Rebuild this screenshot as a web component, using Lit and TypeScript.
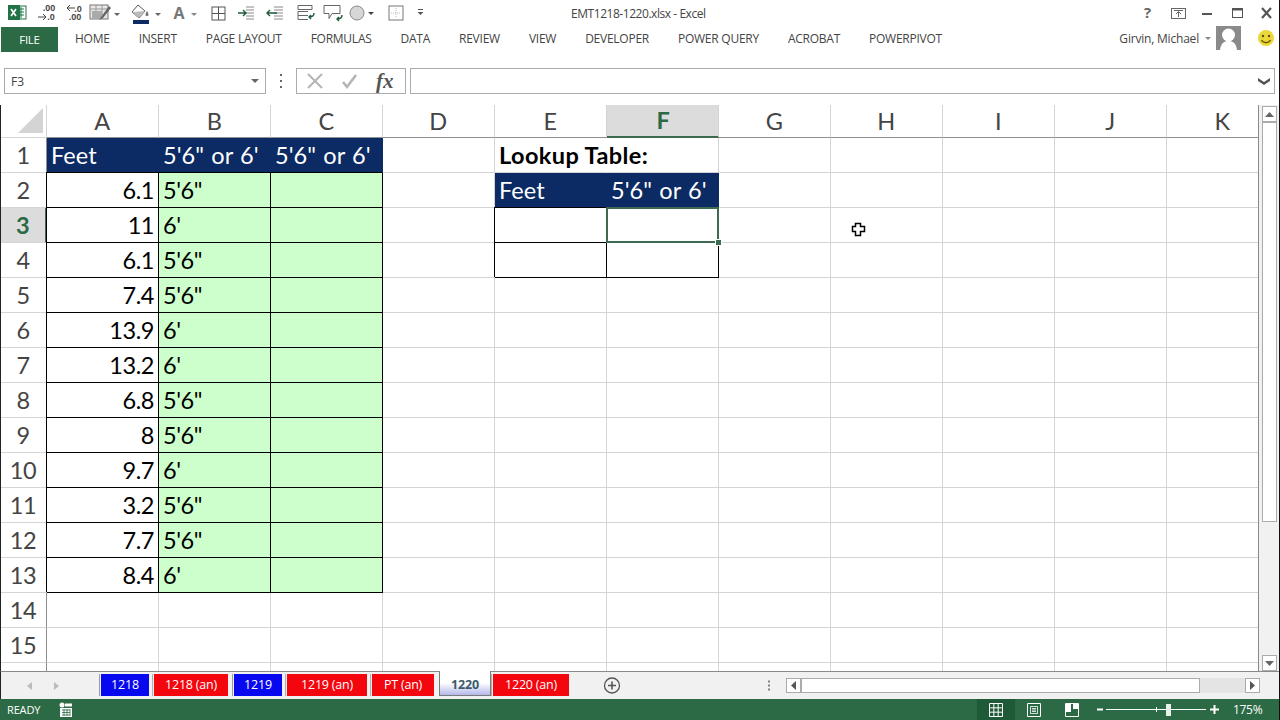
import { LitElement, html, css, svg } from "lit";
import { customElement } from "lit/decorators.js";

const COLS = ["A","B","C","D","E","F","G","H","I","J","K"];
const FEET: [string,string][] = [["6.1",`5'6"`],["11","6'"],["6.1",`5'6"`],["7.4",`5'6"`],["13.9","6'"],["13.2","6'"],["6.8",`5'6"`],["8",`5'6"`],["9.7","6'"],["3.2",`5'6"`],["7.7",`5'6"`],["8.4","6'"]];
const RIBBON = ["HOME","INSERT","PAGE LAYOUT","FORMULAS","DATA","REVIEW","VIEW","DEVELOPER","POWER QUERY","ACROBAT","POWERPIVOT"];
const SHEETS = [
  {t:"1218",c:"blue",w:48,m:0},{t:"1218 (an)",c:"red",w:74,m:5},{t:"1219",c:"blue",w:48,m:6},
  {t:"1219 (an)",c:"red",w:80,m:5},{t:"PT (an)",c:"red",w:62,m:5},{t:"1220",c:"active",w:52,m:5},{t:"1220 (an)",c:"red",w:76,m:2},
];
const HEAD = `5'6" or 6'`;
const ic = (w:number, body:unknown) => html`<svg width=${w} height="26" viewBox="0 0 ${w} 26">${body}</svg>`;
const caret = (x:number,y=13,c="#666") => svg`<path d="M${x} ${y}h6l-3 3z" fill=${c}/>`;

const QAT = [
  ic(30, svg`<rect x="15" y="6" width="11" height="13" fill="#fff" stroke="#217346"/><path d="M18 9h6M18 12h6M18 15h6M21 7v11" stroke="#217346" fill="none"/><rect x="8" y="5" width="12" height="15" fill="#217346"/><path d="M11 9l5 7M16 9l-5 7" stroke="#fff" stroke-width="1.7"/>`),
  ic(30, svg`<text x="19" y="11" class="qt" text-anchor="middle">.00</text><text x="21" y="20" class="qt" text-anchor="middle">.0</text><path d="M8 17h8M13 14l3 3-3 3" stroke="#444" fill="none"/>`),
  ic(28, svg`<text x="18" y="12" class="qt" text-anchor="middle">.0</text><text x="15" y="20" class="qt" text-anchor="middle">.00</text><path d="M16 8H8M11 5L8 8l3 3" stroke="#444" fill="none" transform="translate(-1 0)"/>`),
  ic(36, svg`<rect x="2" y="5" width="18" height="14" fill="#e8e8e8" stroke="#777"/><path d="M2 9h18M8 5v14M14 5v14" stroke="#999"/><path d="M4 11h10v8H4z" fill="#aaa"/><path d="M21 6l-8 11-2 3 4-2 8-10z" fill="#666"/>${caret(26)}`),
  ic(38, svg`<path d="M14 5l-6 7 7 6 6-7z" fill="#fff" stroke="#555"/><path d="M8 12l7 6 6-7z" fill="#bbb"/><path d="M23 11c2 3 2 5 0 5s-2-2 0-5z" fill="#777"/><rect x="9" y="20" width="16" height="4" fill="#0c2a63"/>${caret(31)}`),
  ic(40, svg`<text x="17" y="19" class="qa" text-anchor="middle">A</text>${caret(29,13,"#888")}`),
  ic(30, svg`<rect x="10" y="7" width="13" height="13" fill="none" stroke="#555"/><path d="M16.5 7v13M10 13.5h13" stroke="#555"/>`),
  ic(28, svg`<path d="M14 7h8M14 10h8M14 13h8M14 16h8M14 19h8" stroke="#888"/><path d="M6 13h8M11 10l3 3-3 3" stroke="#1e5b3a" stroke-width="1.4" fill="none"/>`),
  ic(30, svg`<path d="M14 7h9M14 10h9M14 13h9M14 16h9M14 19h9" stroke="#888"/><path d="M17 13H7M10 10l-3 3 3 3" stroke="#1e5b3a" stroke-width="1.4" fill="none"/>`),
  ic(32, svg`<path d="M8 5.500h14v4H8zM8 11.500h10M8 15.500h10M8 19.500h10M8 11.500v8" stroke="#666" fill="none"/><path d="M24 13c0 3-2 4-5 4M21 15l-2 2 2 2" stroke="#1e5b3a" stroke-width="1.4" fill="none"/>`),
  ic(22, svg`<path d="M2 5.500h16v8h-8l-3 5v-5H2z" fill="#fff" stroke="#666"/><path d="M20 15c0 3-2 4-5 4M17 17l-2 2 2 2" stroke="#1e5b3a" stroke-width="1.4" fill="none"/>`),
  ic(36, svg`<circle cx="13" cy="13" r="7" fill="#d6d6d6" stroke="#888"/>${caret(24,12,"#444")}`),
  ic(30, svg`<rect x="9" y="6" width="14" height="14" fill="#fff" stroke="#777"/><path d="M16 8v10M11 13h10" stroke="#bbb" stroke-dasharray="1 1"/>`),
  ic(22, svg`<path d="M8 9.500h5" stroke="#555"/>${caret(7.500,12,"#555")}`),
];

@customElement("app-root")
export class AppRoot extends LitElement {
  static styles = css`
    :host { display: block; width: 1280px; height: 720px; overflow: hidden; background: #fff; font-family: "Open Sans", "Liberation Sans", sans-serif; color: #444; }
    .app { height: 720px; display: flex; flex-direction: column; border-right: 1px solid #111; box-sizing: border-box; }
    svg { display: block; flex: none; }
    .qt { font: 700 9px "Liberation Sans", sans-serif; fill: #444; }
    .qa { font: 700 16px "Open Sans", sans-serif; fill: #777; }

    .title { height: 26px; display: flex; align-items: center; flex: none; }
    .qat { display: flex; width: 430px; flex: none; }
    .doc { margin-left: 141px; font-size: 12px; letter-spacing: -.45px; color: #444; white-space: nowrap; }
    .win { margin-left: auto; display: flex; }

    .ribbon { height: 26px; display: flex; align-items: center; flex: none; font-size: 12px; letter-spacing: -.25px; color: #444; }
    .file { width: 57px; height: 25px; margin-left: 1px; background: #2b6a45; color: #fff; display: flex; align-items: center; justify-content: center; font-size: 11.500px; }
    .rtabs { display: flex; gap: 29px; margin: -2px 0 0 17px; white-space: nowrap; }
    .user { margin-left: auto; display: flex; align-items: center; font-size: 12px; letter-spacing: -.2px; }
    .user span { margin-top: -2px; }

    .fbar { height: 26px; margin-top: 16px; padding: 0 4px; display: flex; flex: none; align-items: stretch; }
    .box { border: 1px solid #ababab; background: #fff; box-sizing: border-box; display: flex; align-items: center; }
    .name { width: 262px; font-size: 12px; padding: 0 6px; justify-content: space-between; }
    .dots { width: 30px; }
    .fx { width: 110px; }
    .input { flex: 1; margin-left: 4px; justify-content: flex-end; padding-right: 3px; }
    .fxt { font: italic 700 21px "Liberation Serif", serif; fill: #555; }

    .sheet { height: 566px; margin-top: 11px; flex: none; display: flex; border-left: 1px solid #222; overflow: hidden; }
    .gridwrap { position: relative; width: 1259px; flex: none; overflow: hidden; margin-left: -1px; border-right: 1px solid #8a8a8a; box-sizing: border-box; }
    .grid { display: grid; grid-template-columns: 47px repeat(11, 112px); grid-template-rows: 33px repeat(16, 35px); font-family: Lato, "Liberation Sans", sans-serif; font-size: 23.500px; letter-spacing: -.45px; color: #000; }
    .c { box-sizing: border-box; border-right: 1px solid #d4d4d4; border-bottom: 1px solid #d4d4d4; padding: 0 4px; display: flex; align-items: center; white-space: nowrap; background: #fff; }
    .ch { border-bottom-color: #8e8e8e; justify-content: center; color: #444; padding: 0 1px 1px 0; }
    .corner { background: #fff; display: block; padding: 0; border-right: 1px solid #d4d4d4; }
    .rh { justify-content: center; color: #444; padding: 0; border-right-color: #8e8e8e; }
    .csel { background: #dcdcdc; color: #2b6a45; font-weight: 700; border-bottom: 2px solid #3c6b50; padding-left: 2px; }
    .rsel { background: #dcdcdc; color: #2b6a45; font-weight: 700; border-right: 2px solid #3c6b50; }
    .num { justify-content: flex-end; }
    .bd { border-right-color: #000; border-bottom-color: #000; box-shadow: -1px -1px 0 #000; }
    .green { background: #ccffcc; }
    .hd { background: #0c2a63; color: #fff; border-color: #0c2a63; letter-spacing: .1px; word-spacing: 1px; }
    .bold { font-weight: 700; color: #000; letter-spacing: .4px; position: relative; z-index: 1; background: transparent; border-right-color: transparent; }
    .sel { position: relative; }
    .sel::after { content: ""; position: absolute; left: -1px; top: -1px; right: -1px; bottom: -1px; border: 2px solid #3c6b50; }
    .sel::before { content: ""; position: absolute; right: -4px; bottom: -4px; width: 5px; height: 5px; background: #3c6b50; border: 1px solid #fff; z-index: 1; }
    .cursor { position: absolute; left: 851px; top: 117px; }

    .vs { flex: 1; background: #f1f1f1; display: flex; flex-direction: column; align-items: center; padding-top: 1px; }
    .btn { box-sizing: border-box; border: 1px solid #ababab; background: #fff; display: flex; align-items: center; justify-content: center; flex: none; }
    .vb { width: 15px; height: 16px; }
    .vthumb { width: 15px; height: 400px; box-sizing: border-box; background: #fff; border: 1px solid #ababab; }
    .vgap { flex: 1; }

    .tabs { height: 28px; flex: none; background: #f1f1f1; display: flex; border-top: 1px solid #8a8a8a; border-left: 1px solid #222; box-sizing: border-box; }
    .nav { width: 100px; flex: none; display: flex; align-items: center; gap: 22px; padding-left: 26px; box-sizing: border-box; }
    .stabs { display: flex; padding-top: 2px; height: 25px; width: 482px; flex: none; }
    .st { height: 22px; box-sizing: border-box; display: flex; align-items: center; justify-content: center; padding-bottom: 1px; font-size: 12.500px; letter-spacing: -.2px; color: #fff; flex: none; }
    .blue { background: #0808f0; box-shadow: -1px 0 0 #f1f1f1, -2px 0 0 #9a9a9a; }
    .red { background: #f4060e; box-shadow: -1px 0 0 #f1f1f1, -2px 0 0 #b0b0b0; }
    .active { height: 25px; margin-top: -3px; padding: 3px 0 0; color: #3c5a6a; font-weight: 700; background: linear-gradient(#fff, #fff 50%, #b4b8ea); border: 1px solid #7b7b7b; border-top: none; }
    .add { margin-left: 20px; }
    .hdots { margin-left: 141px; }
    .hs { display: flex; align-items: center; margin-left: 10px; height: 27px; flex: none; }
    .hb { width: 15px; height: 15px; }
    .hthumb { width: 399px; height: 15px; box-sizing: border-box; background: #fff; border: 1px solid #ababab; }
    .htrack { width: 45px; height: 15px; background: #e4e4e4; }

    .status { height: 21px; flex: 1; background: #2b6a45; color: #fff; display: flex; align-items: center; font-size: 11px; letter-spacing: -.15px; padding-left: 7px; }
    .ready { width: 51px; }
    .sright { margin-left: auto; display: flex; align-items: center; height: 21px; }
    .view { height: 21px; display: flex; align-items: center; justify-content: center; width: 38px; }
    .view.on { background: #1f5a38; }
    .zoom { margin-left: 4px; }
    .pct { width: 46px; font-size: 12px; letter-spacing: -.3px; margin-left: 14px; }
  `;

  private grid() {
    const cells = [];
    cells.push(html`<div class="c corner"><svg width="46" height="32"><path d="M43 3v25H18z" fill="#d4d4d4"/></svg></div>`);
    for (const c of COLS) cells.push(html`<div class="c ch ${c === "F" ? "csel" : ""}">${c}</div>`);
    for (let r = 1; r <= 16; r++) {
      cells.push(html`<div class="c rh ${r === 3 ? "rsel" : ""}">${r <= 15 ? r : ""}</div>`);
      for (const c of COLS) cells.push(this.cell(c, r));
    }
    return cells;
  }

  private cell(c: string, r: number) {
    if (r === 1) {
      if (c === "A") return html`<div class="c hd">Feet</div>`;
      if (c === "B" || c === "C") return html`<div class="c hd">${HEAD}</div>`;
      if (c === "E") return html`<div class="c bold">Lookup Table:</div>`;
    }
    if (r === 2 && c === "E") return html`<div class="c hd">Feet</div>`;
    if (r === 2 && c === "F") return html`<div class="c hd">${HEAD}</div>`;
    if (r >= 2 && r <= 13) {
      const row = FEET[r - 2];
      if (c === "A") return html`<div class="c bd num">${row[0]}</div>`;
      if (c === "B") return html`<div class="c bd green">${row[1]}</div>`;
      if (c === "C") return html`<div class="c bd green"></div>`;
    }
    if ((r === 3 || r === 4) && (c === "E" || c === "F")) {
      return html`<div class="c bd ${r === 3 && c === "F" ? "sel" : ""}"></div>`;
    }
    return html`<div class="c"></div>`;
  }

  render() {
    return html`<div class="app">
      <div class="title">
        <div class="qat">${QAT}</div>
        <div class="doc">EMT1218-1220.xlsx - Excel</div>
        <div class="win">
          <svg width="158" height="26" viewBox="0 0 158 26">
            <text x="23" y="18" style="font:700 15px 'Open Sans',sans-serif;fill:#666">?</text>
            <rect x="50.500" y="8.500" width="14" height="10" fill="none" stroke="#666"/><path d="M53 10.500h9M57.500 17v-5M55 14l2.500-2.500L60 14" stroke="#666" fill="none"/>
            <path d="M81 14h10" stroke="#555" stroke-width="2"/>
            <rect x="111.500" y="8.500" width="10" height="9" fill="none" stroke="#555"/><path d="M111 9.500h11" stroke="#555" stroke-width="2"/>
            <path d="M141 8l9 10M150 8l-9 10" stroke="#555" stroke-width="2.200"/>
          </svg>
        </div>
      </div>

      <div class="ribbon">
        <div class="file">FILE</div>
        <div class="rtabs">${RIBBON.map(t => html`<span>${t}</span>`)}</div>
        <div class="user">
          <span>Girvin, Michael</span>
          <svg width="80" height="26" viewBox="0 0 80 26">
            <path d="M6 11h6l-3 3z" fill="#888"/>
            <rect x="17" y="0" width="25" height="24" fill="#8a8a8a"/>
            <circle cx="29.500" cy="9" r="6.500" fill="#fff"/><path d="M21 24c1-7 4-9 8.500-9s7.500 2 8.500 9z" fill="#fff"/>
            <circle cx="67" cy="12" r="8" fill="#ecd73a"/><circle cx="64" cy="10" r="1.200" fill="#5a5200"/><circle cx="70" cy="10" r="1.200" fill="#5a5200"/><path d="M62.500 14c2 3.500 7 3.500 9 0" stroke="#5a5200" stroke-width="1.200" fill="none"/>
          </svg>
        </div>
      </div>

      <div class="fbar">
        <div class="box name"><span>F3</span><svg width="8" height="6"><path d="M0 1h8L4 5z" fill="#666"/></svg></div>
        <div class="dots"><svg width="30" height="26"><path d="M15 6v2M15 12v2M15 18v2" stroke="#666" stroke-width="2"/></svg></div>
        <div class="box fx"><svg width="108" height="24" viewBox="0 0 108 24">
          <path d="M11 5l14 14M25 5L11 19" stroke="#b4b4b4" stroke-width="2"/>
          <path d="M46 13l4 5 9-12" stroke="#b4b4b4" stroke-width="2.600" fill="none"/>
          <text x="79" y="19" class="fxt">fx</text>
        </svg></div>
        <div class="box input"><svg width="14" height="10"><path d="M1 2l6 4 6-4v3l-6 4-6-4z" fill="#555"/></svg></div>
      </div>

      <div class="sheet">
        <div class="gridwrap">
          <div class="grid">${this.grid()}</div>
          <svg class="cursor" width="15" height="15" viewBox="0 0 15 15"><path d="M4.500 1.500h5v3h4v5h-4v4h-5v-4h-3v-5h3z" fill="#fff" stroke="#000" stroke-width="1.500"/></svg>
        </div>
        <div class="vs">
          <div class="btn vb"><svg width="9" height="5"><path d="M0 5h9L4.500 0z" fill="#666"/></svg></div>
          <div class="vthumb"></div>
          <div class="vgap"></div>
          <div class="btn vb"><svg width="9" height="5"><path d="M0 0h9L4.500 5z" fill="#666"/></svg></div>
        </div>
      </div>

      <div class="tabs">
        <div class="nav">
          <svg width="5" height="8"><path d="M5 0v8L0 4z" fill="#bbb"/></svg>
          <svg width="5" height="8"><path d="M0 0v8l5-4z" fill="#bbb"/></svg>
        </div>
        <div class="stabs">
          ${SHEETS.map(s => html`<div class="st ${s.c}" style="width:${s.w}px;margin-left:${s.m}px">${s.t}</div>`)}
        </div>
        <div class="add"><svg width="18" height="27"><circle cx="9" cy="13.500" r="7.500" fill="none" stroke="#555" stroke-width="1.300"/><path d="M9 9.500v8M5 13.500h8" stroke="#555" stroke-width="1.600"/></svg></div>
        <div class="hdots"><svg width="14" height="27"><path d="M7 8.500v2M7 12.500v2M7 16.500v2" stroke="#666" stroke-width="1.600"/></svg></div>
        <div class="hs">
          <div class="btn hb"><svg width="5" height="9"><path d="M5 0v9L0 4.500z" fill="#555"/></svg></div>
          <div class="hthumb"></div>
          <div class="htrack"></div>
          <div class="btn hb"><svg width="5" height="9"><path d="M0 0v9l5-4.500z" fill="#555"/></svg></div>
        </div>
      </div>

      <div class="status">
        <span class="ready">READY</span>
        <svg width="16" height="16" viewBox="0 0 16 16"><circle cx="4" cy="3" r="2.500" fill="#fff"/><rect x="2" y="6" width="12" height="9" fill="#fff"/><rect x="7" y="1.500" width="7" height="3" fill="#fff"/><path d="M4 8h8M4 10.500h8M4 13h8M6 7v7M9 7v7M12 7v7" stroke="#2b6a45" stroke-width=".8"/></svg>
        <div class="sright">
          <div class="view on"><svg width="14" height="14"><path d="M.5.500h13v13H.5zM.5 4.830h13M.5 9.170h13M4.830.500v13M9.170.500v13" fill="none" stroke="#fff"/></svg></div>
          <div class="view"><svg width="14" height="14"><path d="M.5.500h13v13H.5z" fill="none" stroke="#fff"/><path d="M3.500 3.500h7v7h-7zM5 5.500h4M5 7h4M5 8.500h4" fill="none" stroke="#fff" stroke-width=".8"/></svg></div>
          <div class="view"><svg width="14" height="14"><path d="M.5.500h13v13H.5z" fill="none" stroke="#fff"/><path d="M1 1h5v8H1zM8 1h5v5H8z" fill="#fff"/></svg></div>
          <svg class="zoom" width="124" height="21" viewBox="0 0 124 21">
            <path d="M2 10.500h6" stroke="#fff" stroke-width="2"/>
            <path d="M11 10.500h100M61.500 8v5" stroke="#fff"/>
            <rect x="71" y="5" width="5" height="12" fill="#e8f0ea"/>
            <path d="M115 10.500h9M119.500 6v9" stroke="#fff" stroke-width="2"/>
          </svg>
          <span class="pct">175%</span>
        </div>
      </div>
    </div>`;
  }
}
